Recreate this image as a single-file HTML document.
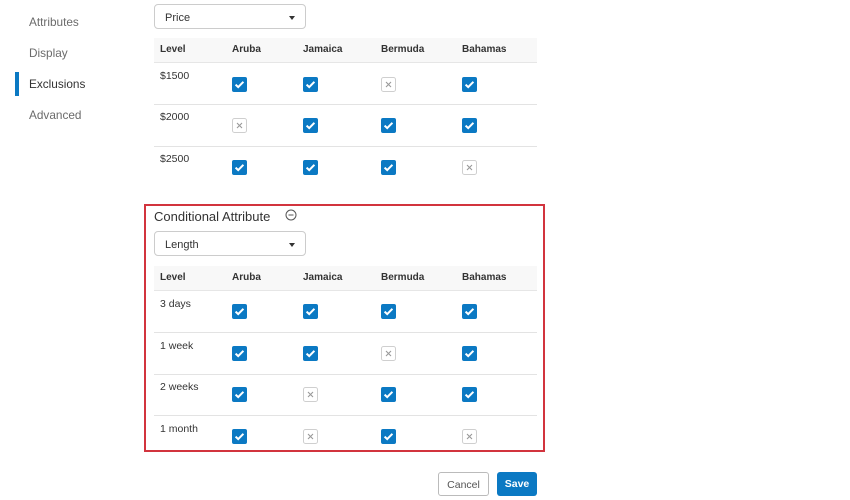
<!DOCTYPE html>
<html><head><style>
body{margin:0;width:850px;height:500px;background:#fff;font-family:"Liberation Sans",sans-serif;position:relative;overflow:hidden;color:#333}
.a{position:absolute}
.nav{left:29px;font-size:11.8px;color:#6b6b6b}
.bar{left:15px;top:72px;width:4px;height:24px;background:#0b79c3}
.sel{width:152px;height:25px;border:1px solid #ccc;border-radius:4px;font-size:11px;line-height:27px;box-sizing:border-box;padding-left:10px;color:#333}
.sel:after{content:"";position:absolute;right:10px;top:11px;border-left:3px solid transparent;border-right:3px solid transparent;border-top:4px solid #333}
.hd{left:154px;width:383px;height:24px;background:#f8f8f8;border-bottom:1px solid #e6e6e6}
.ht{font-size:10px;font-weight:bold;color:#333}
.ln{left:154px;width:383px;height:1px;background:#e3e3e3}
.lv{left:160px;font-size:10.5px;color:#333}
.cb{width:15px;height:15px}
.btn{height:24px;border-radius:3px;font-size:10.5px;line-height:24px;text-align:center;box-sizing:border-box}
</style></head><body>
<div class="a nav" style="top:15px">Attributes</div>
<div class="a nav" style="top:46px">Display</div>
<div class="a bar"></div>
<div class="a nav" style="top:77px;color:#333">Exclusions</div>
<div class="a nav" style="top:108px">Advanced</div>

<div class="a sel" style="left:154px;top:4px">Price</div>
<div class="a hd" style="top:38px"></div>
<div class="a ln" style="top:104px"></div>
<div class="a ln" style="top:146px"></div>

<div class="a" style="left:144px;top:204px;width:397px;height:244px;border:2px solid #d2343e"></div>
<div class="a" style="left:154px;top:209px;font-size:13px;color:#333">Conditional Attribute</div>
<svg class="a" style="left:285px;top:209px" width="12" height="12" viewBox="0 0 12 12"><circle cx="6" cy="6" r="5" fill="none" stroke="#555" stroke-width="1"/><line x1="3.5" y1="6" x2="8.5" y2="6" stroke="#555" stroke-width="1"/></svg>
<div class="a sel" style="left:154px;top:231px">Length</div>
<div class="a hd" style="top:266px"></div>
<div class="a ln" style="top:332px"></div>
<div class="a ln" style="top:374px"></div>
<div class="a ln" style="top:415px"></div>

<div class="a btn" style="left:438px;top:472px;width:51px;border:1px solid #bbb;color:#555">Cancel</div>
<div class="a btn" style="left:497px;top:472px;width:40px;background:#0b79c3;color:#fff;font-weight:bold">Save</div>

<div id="g"></div>
<script>
var cols=[232,303,381,462],names=["Aruba","Jamaica","Bermuda","Bahamas"];
var ON='<svg class="a cb" style="left:LEFTpx;top:TOPpx" viewBox="0 0 15 15"><rect width="15" height="15" rx="2" fill="#0b79c3"/><path d="M3.6 7.6l2.6 2.5 5.2-5.3" fill="none" stroke="#fff" stroke-width="2"/></svg>';
var OFF='<svg class="a cb" style="left:LEFTpx;top:TOPpx" viewBox="0 0 15 15"><rect x=".5" y=".5" width="14" height="14" rx="2" fill="#fff" stroke="#cfcfcf"/><path d="M5 5l5 5M10 5l-5 5" stroke="#999" stroke-width="1.1"/></svg>';
var h="";
function tbl(hy,rows,ys,lys,labels){
 h+='<div class="a ht" style="left:160px;top:'+hy+'px">Level</div>';
 names.forEach(function(n,i){h+='<div class="a ht" style="left:'+cols[i]+'px;top:'+hy+'px">'+n+'</div>';});
 rows.forEach(function(r,j){
  h+='<div class="a lv" style="top:'+lys[j]+'px">'+labels[j]+'</div>';
  r.forEach(function(v,i){h+=(v?ON:OFF).replace("LEFT",cols[i]).replace("TOP",ys[j]);});
 });
}
tbl(44,[[1,1,0,1],[0,1,1,1],[1,1,1,0]],[77,118,160],[70,111,153],["$1500","$2000","$2500"]);
tbl(272,[[1,1,1,1],[1,1,0,1],[1,0,1,1],[1,0,1,0]],[304,346,387,429],[298,340,381,423],["3 days","1 week","2 weeks","1 month"]);
document.getElementById("g").innerHTML=h;
</script>
</body></html>
